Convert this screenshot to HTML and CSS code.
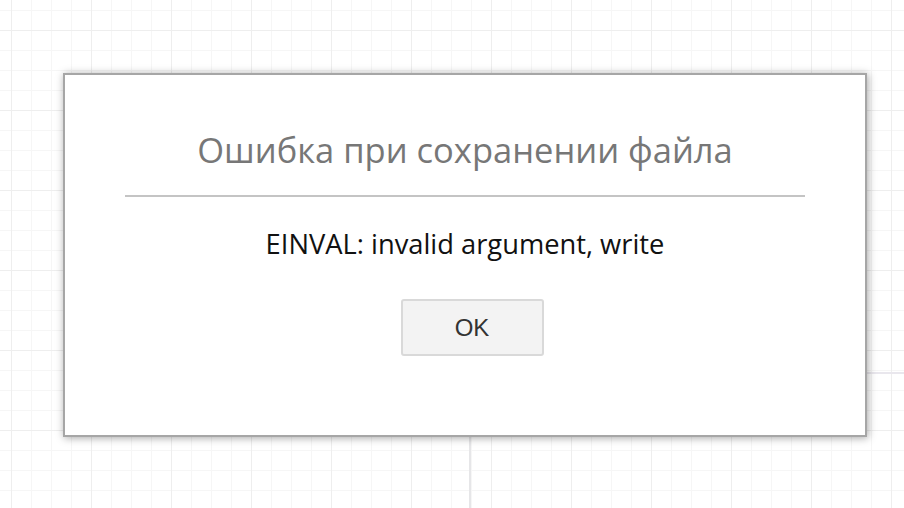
FILE: index.html
```html
<!DOCTYPE html>
<html lang="ru">
<head>
<meta charset="utf-8">
<title>Ошибка</title>
<link rel="stylesheet" href="styles.css">
</head>
<body>
<div class="canvas">
  <div class="edge edge-v"></div>
  <div class="edge edge-h"></div>
  <div class="dialog">
    <h1 class="dialog-title">Ошибка при сохранении файла</h1>
    <hr class="dialog-sep">
    <p class="dialog-msg">EINVAL: invalid argument, write</p>
    <button class="dialog-btn" type="button">OK</button>
  </div>
</div>
</body>
</html>
```
FILE: styles.css
```css
html, body {
  margin: 0;
  padding: 0;
}
body {
  width: 904px;
  height: 508px;
  overflow: hidden;
  background-color: #ffffff;
  background-image:
    linear-gradient(to right, #eeeeee 1px, transparent 1px),
    linear-gradient(to bottom, #eeeeee 1px, transparent 1px),
    linear-gradient(to right, #f6f6f6 1px, transparent 1px),
    linear-gradient(to bottom, #f6f6f6 1px, transparent 1px);
  background-size: 80px 80px, 80px 80px, 20px 20px, 20px 20px;
  background-position: 11px 0, 0 30px, 11px 0, 0 10px;
  font-family: "Open Sans", "DejaVu Sans", sans-serif;
}
.canvas {
  position: relative;
  width: 904px;
  height: 508px;
}
.edge {
  position: absolute;
  background: #e6e6e8;
}
.edge-v {
  left: 469px;
  top: 430px;
  width: 2px;
  height: 80px;
}
.edge-h {
  left: 860px;
  top: 372px;
  width: 50px;
  height: 2px;
  background: #e9e7ed;
}
.dialog {
  position: absolute;
  left: 63px;
  top: 73px;
  width: 804px;
  height: 364px;
  box-sizing: border-box;
  background: #ffffff;
  border: 2px solid #a6a6a6;
  box-shadow: 1px 1px 8px rgba(0, 0, 0, 0.35);
  display: flex;
  flex-direction: column;
  align-items: center;
  padding: 55px 60px 0;
}
.dialog-title {
  margin: 0;
  font-weight: 400;
  font-size: 34.5px;
  line-height: 40px;
  color: #777777;
  white-space: nowrap;
}
.dialog-sep {
  align-self: stretch;
  margin: 25px 0 0;
  border: 0;
  height: 2px;
  background: #c4c4c4;
}
.dialog-msg {
  margin: 31px 0 0;
  font-size: 27.3px;
  line-height: 32px;
  color: #111111;
  white-space: nowrap;
}
.dialog-btn {
  margin: 39px 0 0 14px;
  width: 143px;
  height: 57px;
  flex: none;
  box-sizing: border-box;
  background: #f3f3f3;
  border: 2px solid #d9d9d9;
  border-radius: 3px;
  font-family: "Liberation Sans", Arial, sans-serif;
  font-size: 24px;
  color: #333333;
  padding: 0;
}
```
